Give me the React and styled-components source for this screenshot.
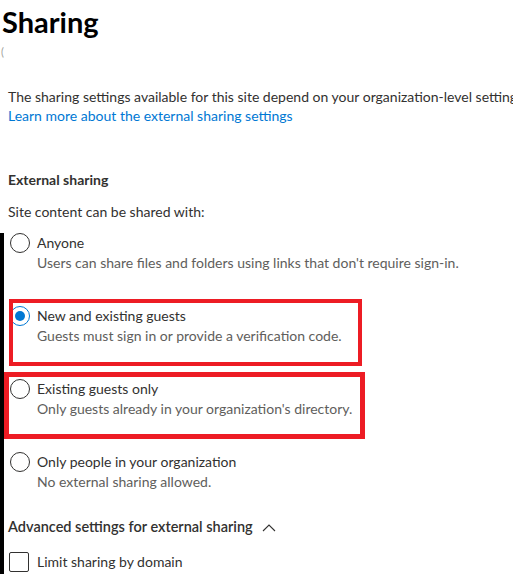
import React from 'react'
import styled, { createGlobalStyle } from 'styled-components'

const GlobalStyle = createGlobalStyle`
  html, body {
    margin: 0;
    padding: 0;
    background: #fff;
    overflow: hidden;
  }
  body {
    font-family: "Segoe UI", Lato, "Liberation Sans", sans-serif;
    color: #323130;
    -webkit-font-smoothing: antialiased;
  }
`

const Page = styled.main`
  display: flex;
  flex-direction: column;
  min-height: 100vh;
  width: 513px;
`

const Title = styled.h1`
  margin: 4px 0 0;
  padding-left: 2px;
  font-size: 29px;
  line-height: 36px;
  font-weight: 700;
  color: #000;
`

const Crumb = styled.span`
  margin-top: 5px;
  padding-left: 1px;
  font-size: 11px;
  line-height: 14px;
  color: #a19f9d;
`

const Intro = styled.div`
  margin-top: 28px;
  padding-left: 8px;
  font-size: 14px;
  line-height: 19px;
  white-space: nowrap;
  overflow: hidden;
`

const Link = styled.a`
  color: #0078d4;
  text-decoration: none;
  display: block;
`

const SectionTitle = styled.h2`
  margin: 45px 0 0;
  padding-left: 8px;
  font-size: 14px;
  line-height: 20px;
  font-weight: 700;
`

const Prompt = styled.div`
  margin-top: 12px;
  padding-left: 8px;
  font-size: 14px;
  line-height: 20px;
`

const Options = styled.section`
  flex: 1;
  margin-top: 11px;
  border-left: 4px solid #000;
  display: flex;
  flex-direction: column;
`

const OptionList = styled.div`
  display: flex;
  flex-direction: column;
  gap: 33px;
`

const OptionRow = styled.label`
  position: relative;
  display: flex;
  gap: 7px;
  padding-left: 6px;
  height: 40px;
  font-size: 14px;
  line-height: 20px;
`

const Radio = styled.span`
  flex: none;
  box-sizing: border-box;
  width: 20px;
  height: 20px;
  border-radius: 50%;
  border: 1px solid ${p => (p.$checked ? '#0078d4' : '#323130')};
  display: flex;
  align-items: center;
  justify-content: center;
  &::after {
    content: '';
    width: 10px;
    height: 10px;
    border-radius: 50%;
    background: ${p => (p.$checked ? '#0078d4' : 'transparent')};
  }
`

const OptionText = styled.span`
  display: flex;
  flex-direction: column;
`

const Desc = styled.span`
  color: #605e5c;
`

const Callout = styled.span`
  position: absolute;
  box-sizing: border-box;
  left: ${p => p.$left}px;
  top: -7px;
  width: ${p => p.$width}px;
  height: 67px;
  border: ${p => p.$weight}px solid #ed1c24;
  pointer-events: none;
`

const Advanced = styled.button`
  margin-top: 25px;
  padding: 0 0 0 4px;
  align-self: flex-start;
  display: flex;
  align-items: center;
  gap: 9px;
  border: 0;
  background: none;
  font: inherit;
  font-size: 14.5px;
  line-height: 20px;
  font-weight: 600;
  color: #323130;
`

const CheckRow = styled.label`
  margin-top: 15px;
  padding-left: 5px;
  display: flex;
  align-items: center;
  gap: 8px;
  font-size: 14px;
  line-height: 20px;
`

const Box = styled.span`
  box-sizing: border-box;
  width: 20px;
  height: 20px;
  border: 1px solid #323130;
  border-radius: 2px;
`

const options = [
  {
    label: 'Anyone',
    desc: "Users can share files and folders using links that don't require sign-in."
  },
  {
    label: 'New and existing guests',
    desc: 'Guests must sign in or provide a verification code.',
    checked: true,
    callout: { left: 5, width: 353, weight: 4 }
  },
  {
    label: 'Existing guests only',
    desc: "Only guests already in your organization's directory.",
    callout: { left: 0, width: 361, weight: 5 }
  },
  {
    label: 'Only people in your organization',
    desc: 'No external sharing allowed.'
  }
]

const ChevronUp = () => (
  <svg width='14' height='9' viewBox='0 0 14 9' fill='none'>
    <polyline points='1,8 7,2 13,8' stroke='#323130' strokeWidth='1.1' />
  </svg>
)

export default function App () {
  return (
    <>
      <GlobalStyle />
      <Page>
        <Title>Sharing</Title>
        <Crumb>(</Crumb>
        <Intro>
          The sharing settings available for this site depend on your organization-level settings.
          <Link href='#0'>Learn more about the external sharing settings</Link>
        </Intro>
        <SectionTitle>External sharing</SectionTitle>
        <Prompt>Site content can be shared with:</Prompt>
        <Options>
          <OptionList>
            {options.map(o => (
              <OptionRow key={o.label}>
                <Radio $checked={o.checked} />
                <OptionText>
                  <span>{o.label}</span>
                  <Desc>{o.desc}</Desc>
                </OptionText>
                {o.callout && (
                  <Callout $left={o.callout.left} $width={o.callout.width} $weight={o.callout.weight} />
                )}
              </OptionRow>
            ))}
          </OptionList>
          <Advanced>
            Advanced settings for external sharing
            <ChevronUp />
          </Advanced>
          <CheckRow>
            <Box />
            Limit sharing by domain
          </CheckRow>
        </Options>
      </Page>
    </>
  )
}
